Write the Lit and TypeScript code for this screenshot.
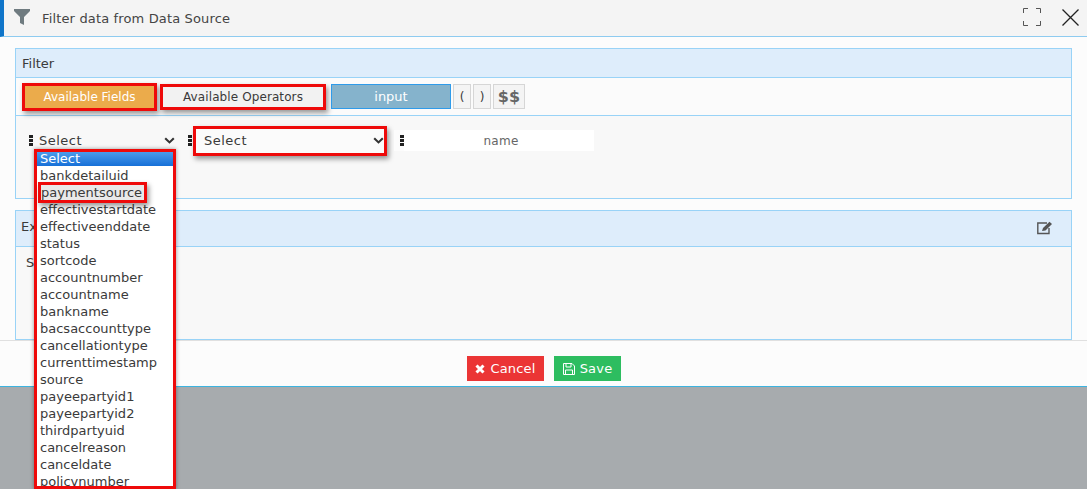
import { LitElement, html, css, svg } from "lit";
import { customElement } from "lit/decorators.js";

const FIELDS = ["bankdetailuid","paymentsource","effectivestartdate","effectiveenddate","status","sortcode","accountnumber","accountname","bankname","bacsaccounttype","cancellationtype","currenttimestamp","source","payeepartyid1","payeepartyid2","thirdpartyuid","cancelreason","canceldate","policynumber"];

const chevron = svg`<svg class="chev" width="11" height="7" viewBox="0 0 11 7"><path d="M1.200 1.200 5.500 5.400 9.800 1.200" fill="none" stroke="#333" stroke-width="2.100"/></svg>`;
const grip = html`<span class="grip"><i></i><i></i><i></i></span>`;

@customElement("app-root")
export class AppRoot extends LitElement {
  static styles = css`
    :host { display: block; width: 1087px; height: 489px; overflow: hidden; position: relative; background: #a7abae;
      font-family: "DejaVu Sans", sans-serif; font-size: 12px; color: #3a3a3a; }
    * { box-sizing: border-box; }
    .modal { background: #fcfcfc; height: 387px; display: flex; flex-direction: column; border-bottom: 1px solid #3cb4e0; }
    .head { height: 37px; flex: none; background: #f4f4f4; border-bottom: 1px solid #8ecbf0; border-left: 4px solid #0f75c9;
      display: flex; align-items: center; padding: 0 8px 2px 10px; }
    .head .title { margin: 2px 0 0 12px; flex: 1; font-size: 13px; letter-spacing: .15px; color: #444; }
    .head svg { display: block; }
    .full { margin-right: 21px; }
    .body { flex: 1; padding: 11px 15px 0; display: flex; flex-direction: column; gap: 11px; }
    .panel { border: 1px solid #99d3f7; background: #f8f8f8; }
    .ptitle { height: 29px; background: #deedfb; border-bottom: 1px solid #99d3f7; display: flex; align-items: center;
      padding: 0 6px; font-size: 13px; justify-content: space-between; }
    .ptitle.ex { height: 36px; padding-right: 18px; padding-left: 5px; }
    .ptitle.ex span { margin-bottom: 5px; }
    .ptitle.ex svg { margin-bottom: 2px; }
    .f1 { height: 151px; }
    .f2 { height: 130px; }
    .tools { height: 38px; background: #fbfbfb; border-bottom: 1px solid #99d3f7; display: flex; align-items: center; padding: 0 6px 0 6px; }
    .btn { height: 25px; display: flex; align-items: center; justify-content: center; font-size: 12px; }
    .af { width: 135px; height: 28px; background: #ebab4b; color: #fff; border: 3px solid #ee0a0a; box-shadow: 2px 3px 5px rgba(0,0,0,.4); }
    .ao { width: 166px; height: 26px; margin-left: 3px; background: #f2f2f2; border: 3px solid #ee0a0a; letter-spacing: .1px; box-shadow: 2px 3px 5px rgba(0,0,0,.4); }
    .inp { width: 120px; margin-left: 5px; background: #85b3cc; color: #fff; border: 1px solid #2f9bea; font-size: 13px; }
    .sq { background: #f4f4f4; border: 1px solid #d6d6d6; }
    .p1, .p2 { width: 18px; margin-left: 2px; }
    .dl { width: 32px; margin-left: 2px; font-weight: 700; font-size: 16px; color: #666; }
    .row { display: flex; align-items: center; padding-left: 13px; height: 49px; }
    .grip { display: inline-flex; flex-direction: column; gap: 1px; width: 4px; flex: none; }
    .grip i { display: block; width: 4px; height: 3px; background: #222; }
    .sel { display: flex; align-items: center; justify-content: space-between; height: 22px; font-size: 13px; letter-spacing: .5px; }
    .s1 { width: 139px; margin-left: 4px; padding: 0 1px 0 2px; }
    .s2 { width: 194px; height: 30px; margin-left: 1px; border: 3px solid #ee0a0a; background: #fbfbfb; padding: 0 0 0 8px; box-shadow: 2px 3px 5px rgba(0,0,0,.4); }
    .g2 { margin-left: 12px; display: flex; }
    .namewrap { width: 200px; height: 21px; margin-left: 7px; background: #fcfcfc; display: flex; align-items: center; padding-left: 6px; }
    .name { flex: 1; height: 21px; background: #fff; display: flex; align-items: center; justify-content: center; padding-left: 4px; font-size: 12px; color: #666; letter-spacing: .3px; }
    .s-txt { padding: 8px 0 0 10px; font-size: 13px; }
    .foot { height: 46px; flex: none; border-top: 1px solid #e0e0e0; display: flex; justify-content: center; align-items: center; gap: 10px; padding: 10px 0 0 1px; }
    .cbtn { height: 25px; display: flex; align-items: center; justify-content: center; gap: 5px; color: #fff; font-size: 13px; letter-spacing: .2px; }
    .cancel { width: 77px; background: #eb3535; }
    .save { width: 67px; background: #2dbd60; }
    .drop { position: absolute; left: 34px; top: 149px; width: 142px; height: 340px; background: #fff; border: 3px solid #ee0a0a;
      font-size: 13px; line-height: 17px; overflow: hidden; box-shadow: 0 0 4px rgba(0,0,0,.4); }
    .opt { height: 17px; padding-left: 3px; white-space: nowrap; }
    .opt.cur { background: linear-gradient(#4c9bea, #1770d8); color: #fff; height: 14px; line-height: 14px; margin-bottom: 1px; }
    .hl { position: absolute; left: 38px; top: 182px; width: 109px; height: 21px; border: 3px solid #ee0a0a; background: #e9e9e9;
      box-shadow: 2px 3px 5px rgba(0,0,0,.4); font-size: 13px; line-height: 15px; white-space: nowrap; }
  `;

  render() {
    return html`
      <div class="modal">
        <div class="head">
          <svg width="16" height="16" viewBox="0 0 16 16"><path d="M0 0H16V2L10 8V16L6 14V8L0 2Z" fill="#6f7b80"/></svg>
          <span class="title">Filter data from Data Source</span>
          <svg class="full" width="18" height="18" viewBox="0 0 18 18"><path d="M.5 5V.5H5M13 .5H17.500V5M17.500 13V17.500H13M5 17.500H.5V13" fill="none" stroke="#555"/></svg>
          <svg width="17" height="17" viewBox="0 0 17 17"><path d="M.5 .5 16.500 16.500M16.500 .5 .5 16.500" fill="none" stroke="#222" stroke-width="1.300"/></svg>
        </div>
        <div class="body">
          <div class="panel f1">
            <div class="ptitle">Filter</div>
            <div class="tools">
              <div class="btn af">Available Fields</div>
              <div class="btn ao">Available Operators</div>
              <div class="btn inp">input</div>
              <div class="btn sq p1">(</div>
              <div class="btn sq p2">)</div>
              <div class="btn sq dl">$$</div>
            </div>
            <div class="row">
              ${grip}
              <div class="sel s1"><span>Select</span>${chevron}</div>
              <span class="g2">${grip}</span>
              <div class="sel s2"><span>Select</span>${chevron}</div>
              <div class="namewrap">${grip}<div class="name">name</div></div>
            </div>
          </div>
          <div class="panel f2">
            <div class="ptitle ex"><span>Expression</span>
              <svg width="16" height="14" viewBox="0 0 16 14"><path d="M12 7V12.500H.8V2H10" fill="none" stroke="#555" stroke-width="1.400"/><path d="M5 10 6 7 12.500 .8 15 3 8.500 9.500Z" fill="#555"/></svg>
            </div>
            <div class="s-txt">Select</div>
          </div>
        </div>
        <div class="foot">
          <div class="cbtn cancel">
            <svg width="10" height="10" viewBox="0 0 10 10"><path d="M1.500 1.500 8.500 8.500M8.500 1.500 1.500 8.500" stroke="#fff" stroke-width="3"/></svg>
            Cancel</div>
          <div class="cbtn save">
            <svg width="12" height="12" viewBox="0 0 12 12"><path d="M.5.5H9L11.500 3V11.500H.5ZM3 .5V4H8V.5M2.500 11.500V7H9.500V11.500" fill="none" stroke="#fff"/></svg>
            Save</div>
        </div>
      </div>
      <div class="drop">
        <div class="opt cur">Select</div>
        ${FIELDS.map((f) => html`<div class="opt">${f}</div>`)}
      </div>
      <div class="hl">paymentsource</div>
    `;
  }
}
